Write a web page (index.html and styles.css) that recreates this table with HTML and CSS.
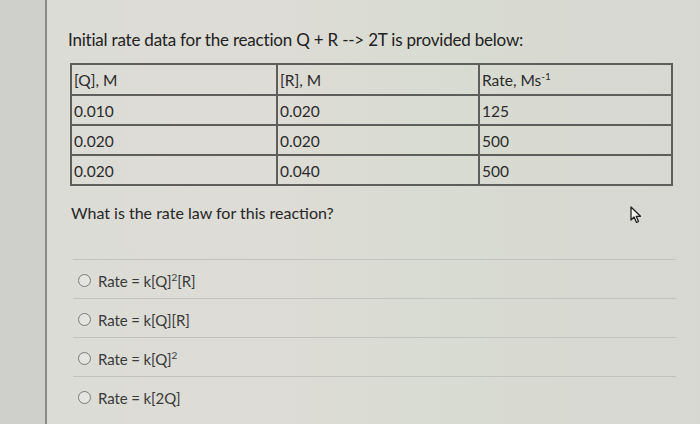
FILE: index.html
```html
<!DOCTYPE html>
<html>
<head>
<meta charset="utf-8">
<link rel="stylesheet" href="styles.css">
</head>
<body>
<div class="screen">
  <div class="side"></div>
  <div class="main">
    <p class="title">Initial rate data for the reaction Q + R --&gt; 2T is provided below:</p>
    <table class="data">
      <tr><td class="c1">[Q], M</td><td class="c2">[R], M</td><td class="c3">Rate, Ms<sup>-1</sup></td></tr>
      <tr><td>0.010</td><td>0.020</td><td>125</td></tr>
      <tr><td>0.020</td><td>0.020</td><td>500</td></tr>
      <tr><td>0.020</td><td>0.040</td><td>500</td></tr>
    </table>
    <div class="qrow">
      <p class="question">What is the rate law for this reaction?</p>
      <svg class="cursor" width="14" height="18" viewBox="0 0 14 18"><path d="M2 1 L2 14 L5 11 L7.5 16.5 L9.5 15.5 L7.2 10.3 L11.5 10.3 Z" fill="#f4f4f0" stroke="#222" stroke-width="1.3" stroke-linejoin="round"/></svg>
    </div>
    <div class="options">
      <div class="opt"><span class="radio"></span><span class="otext">Rate = k[Q]<sup>2</sup>[R]</span></div>
      <div class="opt"><span class="radio"></span><span class="otext">Rate = k[Q][R]</span></div>
      <div class="opt"><span class="radio"></span><span class="otext">Rate = k[Q]<sup>2</sup></span></div>
      <div class="opt"><span class="radio"></span><span class="otext">Rate = k[2Q]</span></div>
    </div>
  </div>
</div>
</body>
</html>
```

FILE: styles.css
```css
html, body {
  margin: 0;
  padding: 0;
}
body {
  width: 700px;
  height: 424px;
  overflow: hidden;
  font-family: Lato, "Liberation Sans", sans-serif;
  color: #262626;
}
.screen {
  display: flex;
  height: 424px;
  background: linear-gradient(90deg, #dcdcd7 0%, #dddcd6 40%, #d9dcd2 60%, #d7d8d2 100%);
}
.side {
  width: 45px;
  flex: none;
  background: #cfcfcb;
  border-right: 2px solid #8a8a86;
}
.main {
  flex: 1;
  padding: 30px 0 0 21px;
}
.title {
  margin: 0;
  font-size: 17px;
  line-height: 20px;
  letter-spacing: -0.2px;
  color: #222;
}
.data {
  margin: 13px 0 0 2px;
  border-collapse: collapse;
  width: 603px;
  font-size: 15.5px;
  color: #2a2a2a;
}
.data td {
  border: 2px solid #5e5e5c;
  height: 27px;
  padding: 1px 2px 0 2px;
  vertical-align: middle;
}
.data tr:first-child td {
  height: 28px;
}
.c1 { width: 200px; }
.c2 { width: 196px; }
.data sup {
  font-size: 10px;
  line-height: 0;
  vertical-align: 6px;
}
.qrow {
  display: flex;
  align-items: center;
  justify-content: space-between;
  width: 572px;
  margin: 16px 0 0 3px;
}
.question {
  margin: 0;
  font-size: 16px;
  line-height: 20px;
  color: #262626;
}
.cursor {
  margin-top: 4px;
}
.options {
  margin: 35px 0 0 5px;
  width: 603px;
}
.opt {
  display: flex;
  align-items: center;
  gap: 7px;
  height: 39px;
  padding: 3px 0 0 5px;
  border-top: 1.5px solid #c2c3bd;
  box-sizing: border-box;
}
.radio {
  width: 11px;
  height: 11px;
  border: 1.5px solid #7a7a78;
  border-radius: 50%;
  background: #e4e4e0;
  flex: none;
}
.otext {
  font-size: 15px;
  color: #3a3a3a;
  letter-spacing: -0.1px;
}
.otext sup {
  font-size: 10px;
  line-height: 0;
  vertical-align: 6px;
}
```
